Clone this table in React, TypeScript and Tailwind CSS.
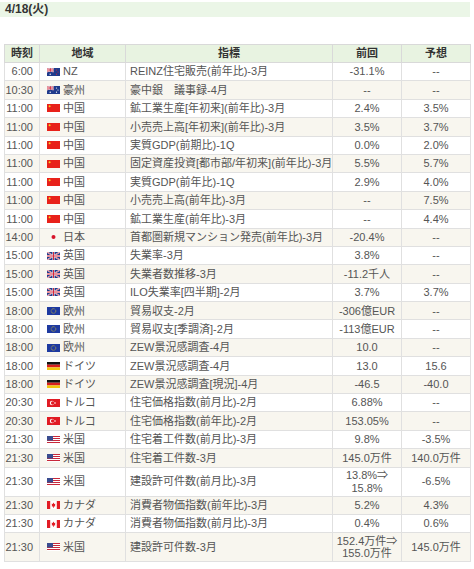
import React from "react";

type Flag = "nz" | "au" | "cn" | "jp" | "uk" | "eu" | "de" | "tr" | "us" | "ca";

const rows: [string, Flag, string, string, string, string][] = [
  ["6:00", "nz", "NZ", "REINZ住宅販売(前年比)-3月", "-31.1%", "--"],
  ["10:30", "au", "豪州", "豪中銀　議事録-4月", "--", "--"],
  ["11:00", "cn", "中国", "鉱工業生産[年初来](前年比)-3月", "2.4%", "3.5%"],
  ["11:00", "cn", "中国", "小売売上高[年初来](前年比)-3月", "3.5%", "3.7%"],
  ["11:00", "cn", "中国", "実質GDP(前期比)-1Q", "0.0%", "2.0%"],
  ["11:00", "cn", "中国", "固定資産投資[都市部/年初来](前年比)-3月", "5.5%", "5.7%"],
  ["11:00", "cn", "中国", "実質GDP(前年比)-1Q", "2.9%", "4.0%"],
  ["11:00", "cn", "中国", "小売売上高(前年比)-3月", "--", "7.5%"],
  ["11:00", "cn", "中国", "鉱工業生産(前年比)-3月", "--", "4.4%"],
  ["14:00", "jp", "日本", "首都圏新規マンション発売(前年比)-3月", "-20.4%", "--"],
  ["15:00", "uk", "英国", "失業率-3月", "3.8%", "--"],
  ["15:00", "uk", "英国", "失業者数推移-3月", "-11.2千人", "--"],
  ["15:00", "uk", "英国", "ILO失業率[四半期]-2月", "3.7%", "3.7%"],
  ["18:00", "eu", "欧州", "貿易収支-2月", "-306億EUR", "--"],
  ["18:00", "eu", "欧州", "貿易収支[季調済]-2月", "-113億EUR", "--"],
  ["18:00", "eu", "欧州", "ZEW景況感調査-4月", "10.0", "--"],
  ["18:00", "de", "ドイツ", "ZEW景況感調査-4月", "13.0", "15.6"],
  ["18:00", "de", "ドイツ", "ZEW景況感調査[現況]-4月", "-46.5", "-40.0"],
  ["20:30", "tr", "トルコ", "住宅価格指数(前月比)-2月", "6.88%", "--"],
  ["20:30", "tr", "トルコ", "住宅価格指数(前年比)-2月", "153.05%", "--"],
  ["21:30", "us", "米国", "住宅着工件数(前月比)-3月", "9.8%", "-3.5%"],
  ["21:30", "us", "米国", "住宅着工件数-3月", "145.0万件", "140.0万件"],
  ["21:30", "us", "米国", "建設許可件数(前月比)-3月", "13.8%⇒\n15.8%", "-6.5%"],
  ["21:30", "ca", "カナダ", "消費者物価指数(前年比)-3月", "5.2%", "4.3%"],
  ["21:30", "ca", "カナダ", "消費者物価指数(前月比)-3月", "0.4%", "0.6%"],
  ["21:30", "us", "米国", "建設許可件数-3月", "152.4万件⇒\n155.0万件", "145.0万件"],
];

function Jack({ w, h }: { w: number; h: number }) {
  return (
    <g>
      <rect width={w} height={h} fill="#1f3b8c" />
      <path d={`M0 0L${w} ${h}M${w} 0L0 ${h}`} stroke="#fff" strokeWidth={1.4} />
      <path d={`M0 0L${w} ${h}M${w} 0L0 ${h}`} stroke="#d0243a" strokeWidth={0.6} />
      <path d={`M${w / 2} 0V${h}M0 ${h / 2}H${w}`} stroke="#fff" strokeWidth={2} />
      <path d={`M${w / 2} 0V${h}M0 ${h / 2}H${w}`} stroke="#d0243a" strokeWidth={1} />
    </g>
  );
}

function FlagIcon({ f }: { f: Flag }) {
  const svg = (c: React.ReactNode) => (
    <svg width="13" height="8" viewBox="0 0 13 8" className="shrink-0">
      {c}
    </svg>
  );
  switch (f) {
    case "nz":
    case "au":
      return svg(
        <>
          <rect width="13" height="8" fill="#1f3b8c" />
          <Jack w={6.5} h={4} />
          <circle cx="9.5" cy="2" r="0.6" fill={f === "nz" ? "#d0243a" : "#fff"} />
          <circle cx="11" cy="4" r="0.6" fill={f === "nz" ? "#d0243a" : "#fff"} />
          <circle cx="9.5" cy="6.2" r="0.6" fill={f === "nz" ? "#d0243a" : "#fff"} />
          <circle cx="3.2" cy="6.2" r="0.7" fill="#fff" />
        </>
      );
    case "cn":
      return svg(
        <>
          <rect width="13" height="8" fill="#e8211a" />
          <circle cx="2.6" cy="2.2" r="1" fill="#f7d21e" />
        </>
      );
    case "jp":
      return svg(<circle cx="6.5" cy="4" r="2" fill="#d7142b" />);
    case "uk":
      return svg(<Jack w={13} h={8} />);
    case "eu":
      return svg(
        <>
          <rect width="13" height="8" fill="#1e3aa0" />
          <circle cx="6.5" cy="4" r="2.3" fill="none" stroke="#f3d21f" strokeWidth="0.7" strokeDasharray="0.7 0.5" />
        </>
      );
    case "de":
      return svg(
        <>
          <rect width="13" height="2.7" fill="#111" />
          <rect y="2.7" width="13" height="2.7" fill="#d81e1e" />
          <rect y="5.4" width="13" height="2.6" fill="#f2c50c" />
        </>
      );
    case "tr":
      return svg(
        <>
          <rect width="13" height="8" fill="#e11b24" />
          <circle cx="5" cy="4" r="2.2" fill="#fff" />
          <circle cx="5.7" cy="4" r="1.8" fill="#e11b24" />
          <circle cx="8" cy="4" r="0.8" fill="#fff" />
        </>
      );
    case "us":
      return svg(
        <>
          <rect width="13" height="8" fill="#fff" />
          {[0, 2, 4, 6].map((y) => (
            <rect key={y} y={y} width="13" height="1" fill="#c8283b" />
          ))}
          <rect width="6" height="4.5" fill="#3a4c8f" />
        </>
      );
    case "ca":
      return svg(
        <>
          <rect width="13" height="8" fill="#fff" />
          <rect width="3.2" height="8" fill="#e21c25" />
          <rect x="9.8" width="3.2" height="8" fill="#e21c25" />
          <path d="M6.5 1.5L7.3 3L8.4 2.7L7.9 4.6L8.6 4.9L6.8 5.8V7H6.2V5.8L4.4 4.9L5.1 4.6L4.6 2.7L5.7 3Z" fill="#e21c25" />
        </>
      );
  }
}

export default function App() {
  return (
    <div
      className="pt-[2px] text-[#555] bg-white"
      style={{ fontFamily: '"Liberation Sans", "Noto Sans CJK JP", sans-serif' }}
    >
      <div className="w-[470px] h-[15px] bg-[#ebf6e7] pl-[5px] text-[12px] leading-[15px] font-bold text-[#333]">
        4/18(火)
      </div>

      <table className="mt-[27px] ml-[4px] w-[466px] border-collapse table-fixed text-[11px] leading-[12.5px]">
        <colgroup>
          <col className="w-[35px]" />
          <col className="w-[86px]" />
          <col className="w-[207px]" />
          <col className="w-[69px]" />
          <col className="w-[69px]" />
        </colgroup>
        <thead>
          <tr className="bg-[#e8f3e1] text-[#333] font-bold">
            {["時刻", "地域", "指標", "前回", "予想"].map((h) => (
              <th key={h} className="border border-[#d9d9d9] h-[18px] text-center font-bold">
                {h}
              </th>
            ))}
          </tr>
        </thead>
        <tbody>
          {rows.map(([time, flag, region, name, prev, fc], i) => {
            const two = prev.includes("\n");
            return (
              <tr key={i} className={i % 2 === 1 ? "bg-[#f8f6ef]" : "bg-white"}>
                <td className={`border border-[#e0e0e0] text-right pr-[6px] ${two ? "h-[29px]" : "h-[18.4px]"}`}>
                  {time}
                </td>
                <td className="border border-[#e0e0e0] pl-[7px]">
                  <div className="flex items-center gap-[3px]">
                    <FlagIcon f={flag} />
                    <span>{region}</span>
                  </div>
                </td>
                <td className="border border-[#e0e0e0] pl-[4px] whitespace-nowrap overflow-hidden">{name}</td>
                <td className="border border-[#e0e0e0] text-center whitespace-pre-line">{prev}</td>
                <td className="border border-[#e0e0e0] text-center">{fc}</td>
              </tr>
            );
          })}
        </tbody>
      </table>
    </div>
  );
}
